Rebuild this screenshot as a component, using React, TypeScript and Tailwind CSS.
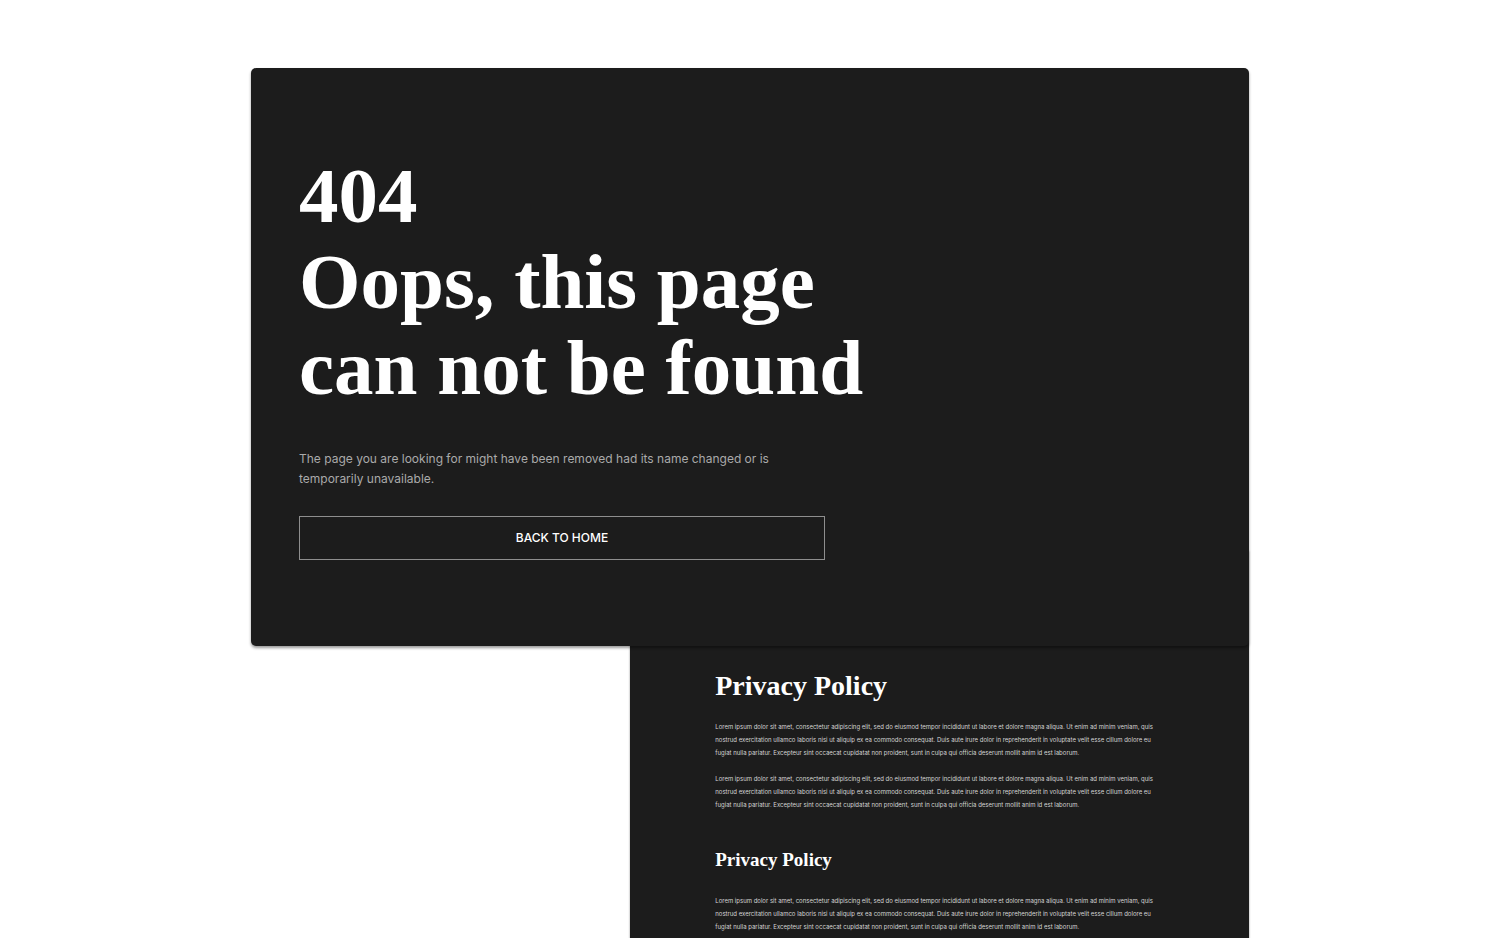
/**
 * Error page with the privacy policy panel below it
 *
 * @module App
 */

import React from 'react';

const LOREM_LINES = [
  'Lorem ipsum dolor sit amet, consectetur adipiscing elit, sed do eiusmod tempor incididunt ut labore et dolore magna aliqua. Ut enim ad minim veniam, quis',
  'nostrud exercitation ullamco laboris nisi ut aliquip ex ea commodo consequat. Duis aute irure dolor in reprehenderit in voluptate velit esse cillum dolore eu',
  'fugiat nulla pariatur. Excepteur sint occaecat cupidatat non proident, sunt in culpa qui officia deserunt mollit anim id est laborum.',
];

/** Body copy, broken at fixed lines */
function PolicyText() {
  return (
    <p className="whitespace-nowrap text-[6px] leading-[13px] text-neutral-300">
      {LOREM_LINES.map((line) => (
        <span key={line} className="block">
          {line}
        </span>
      ))}
    </p>
  );
}

function NotFound() {
  return (
    <section className="relative z-10 rounded-[5px] bg-[#1c1c1c] px-12 pt-[85px] pb-[86px] shadow-[0_2px_3px_rgba(0,0,0,0.4)]">
      <h1 className="font-['Liberation_Serif',serif] text-[79px] leading-[86px] font-bold whitespace-nowrap text-white">
        404
        <br />
        Oops, this page
        <br />
        can not be found
      </h1>
      <p className="mt-[38px] max-w-[500px] text-[12px] leading-5 text-[#aaaaaa]">
        The page you are looking for might have been removed had its name changed or is temporarily unavailable.
      </p>
      <button
        type="button"
        className="mt-[27px] block h-11 w-full max-w-[526px] border border-[#8e8e8e] text-[12px] font-medium text-white"
      >
        BACK TO HOME
      </button>
    </section>
  );
}

/** Slides under the bottom edge of the error card */
function PrivacyPolicy() {
  return (
    <section className="-mt-24 ml-auto w-[62%] bg-[#1c1c1c] px-[85px] pt-30 pb-12 shadow-[0_1px_2px_rgba(0,0,0,0.4)]">
      <h2 className="font-['Liberation_Serif',serif] text-[28px] leading-8 font-bold text-white">Privacy Policy</h2>
      <div className="mt-[18px] space-y-[13px]">
        <PolicyText />
        <PolicyText />
      </div>
      <h3 className="mt-[37px] font-['Liberation_Serif',serif] text-[19px] leading-6 font-bold text-white">Privacy Policy</h3>
      <div className="mt-[22px]">
        <PolicyText />
      </div>
    </section>
  );
}

export default function App() {
  return (
    <main className="h-screen overflow-hidden bg-white px-4 pt-[68px] font-[Inter,sans-serif]">
      <div className="mx-auto max-w-[998px]">
        <NotFound />
        <PrivacyPolicy />
      </div>
    </main>
  );
}
